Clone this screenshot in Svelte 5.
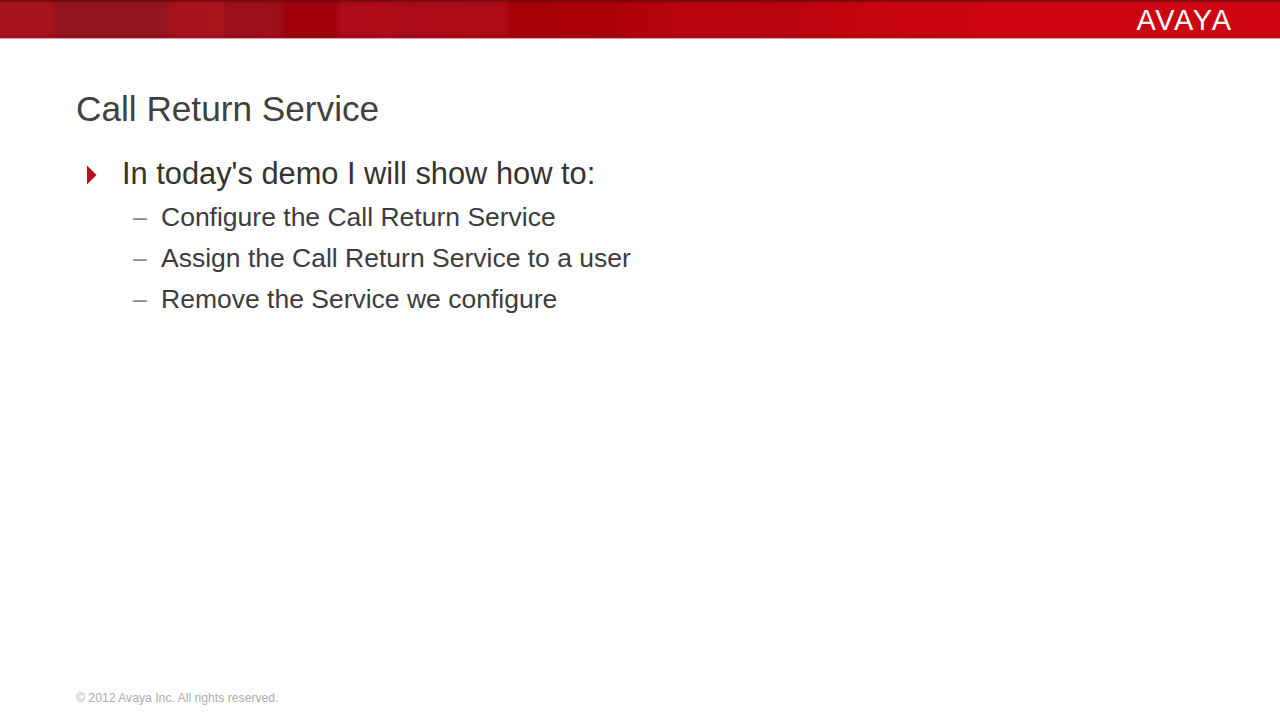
<script>
  const items = ['Configure the Call Return Service', 'Assign the Call Return Service to a user', 'Remove the Service we configure'];
</script>

<div class="slide">
  <header class="bar">
    <span class="logo">AVAYA</span>
  </header>
  <main class="content">
    <h1>Call Return Service</h1>
    <div class="lead">
      <svg class="arrow" width="10" height="20" viewBox="0 0 10 20"><path d="M0 0.5 L9.5 10 L0 19.5 Z" fill="#c00d1a"/></svg>
      <span>In today's demo I will show how to:</span>
    </div>
    <ul>
      {#each items as item}
        <li><span class="dash">–</span><span class="txt">{item}</span></li>
      {/each}
    </ul>
  </main>
  <footer>© 2012 Avaya Inc. All rights reserved.</footer>
</div>

<style>
  :global(body) { margin: 0; background: #fff; }
  .slide {
    width: 1280px; height: 720px; display: flex; flex-direction: column;
    font-family: "Liberation Sans", Arial, sans-serif; color: #3c3c3c; overflow: hidden;
  }
  .bar {
    height: 39px; flex: none; display: flex; justify-content: flex-end; align-items: center;
    padding-right: 49px; box-sizing: border-box;
    border-top: 1px solid #6e0a10;
    border-bottom: 1px solid #e3a0a4;
    background:
      linear-gradient(to bottom, rgba(80,0,0,.35) 0, rgba(80,0,0,0) 3px, rgba(0,0,0,0) 33px, rgba(120,0,20,.3) 34px, rgba(120,0,20,.1) 37px),
      linear-gradient(to right,
        #a8141c 0, #a8141c 50px, #941420 57px, #941420 165px, #a8121a 172px, #ac141c 222px,
        #9c101c 226px, #9e0e18 280px, #a00008 287px, #a00008 334px, #ac0c18 342px, #b00c18 392px,
        #aa0c18 400px, #ae0c14 505px, #a60008 512px, #ac0008 610px, #b80410 680px, #b80410 730px,
        #bc0410 800px, #c4040e 860px, #cc0510 980px, #ce0510 1100px, #cc0510 1280px);
  }
  .logo {
    color: #fff; font-size: 29px; line-height: 30px; letter-spacing: 1.6px; margin-right: -1.6px;
  }
  .content { flex: 1; padding: 50px 0 0 76px; }
  h1 {
    margin: 0; font-weight: 400; font-size: 35.2px; line-height: 40px; color: #404040;
  }
  .lead {
    display: flex; align-items: center; margin-top: 25px; font-size: 30.8px; line-height: 40px; color: #333;
    padding-left: 11px;
  }
  .arrow { margin-right: 25px; position: relative; top: 1px; }
  ul { list-style: none; margin: 3px 0 0; padding: 0 0 0 57px; }
  li { display: flex; font-size: 26.5px; line-height: 41px; color: #3c3c3c; }
  .dash { width: 28px; color: #8a8a8a; flex: none; font-size: 25px; }
  footer {
    padding: 0 0 15px 76px; font-size: 12.2px; line-height: 14px; color: #adadad;
  }
</style>
